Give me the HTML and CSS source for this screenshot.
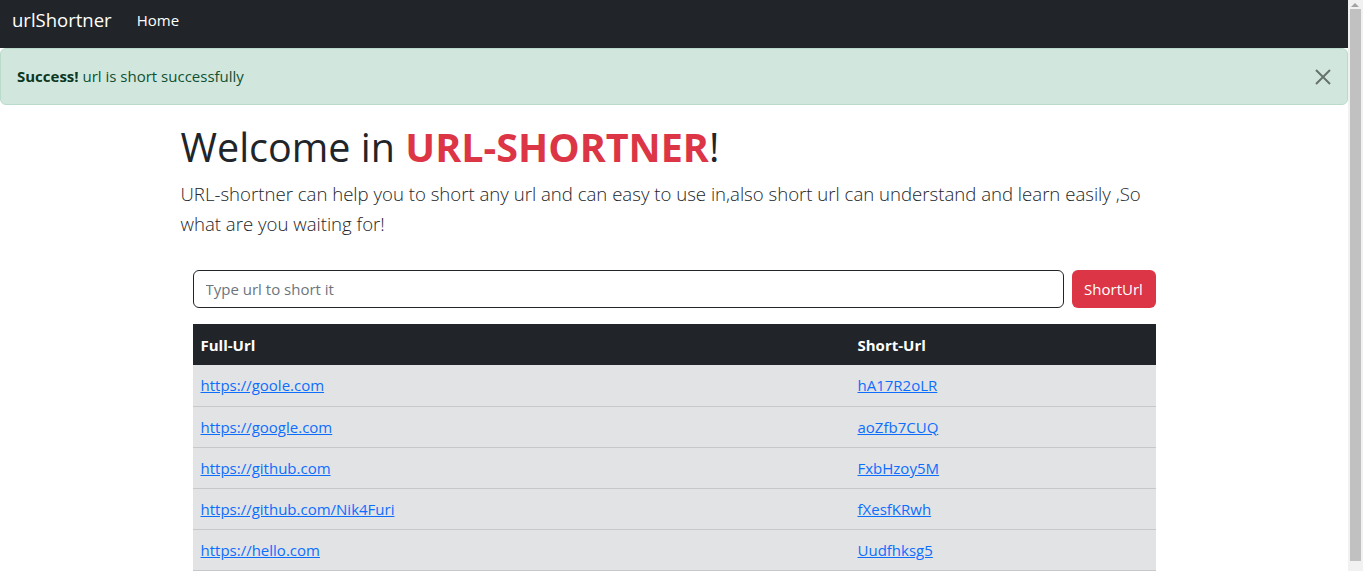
FILE: index.html
```html
<!DOCTYPE html>
<html lang="en">
<head>
<meta charset="utf-8">
<title>urlShortner</title>
<link rel="stylesheet" href="styles.css">
</head>
<body>
<div class="page">
  <nav class="navbar">
    <a class="brand" href="#">urlShortner</a>
    <a class="nav-link" href="#">Home</a>
  </nav>
  <div class="alert">
    <span><strong>Success!</strong> url is short successfully</span>
    <button class="btn-close" aria-label="Close">
      <svg viewBox="0 0 16 16" width="16" height="16"><path d="M1 1 L15 15 M15 1 L1 15" stroke="#000" stroke-width="2" fill="none"/></svg>
    </button>
  </div>
  <main class="container">
    <h1 class="title">Welcome in <b class="red">URL-SHORTNER</b>!</h1>
    <p class="lead">URL-shortner can help you to short any url and can easy to use in,also short url can understand and learn easily ,So what are you waiting for!</p>
    <div class="inner">
      <form class="url-form">
        <input class="url-input" type="text" placeholder="Type url to short it">
        <button class="btn-red" type="button">ShortUrl</button>
      </form>
      <table class="url-table">
        <thead>
          <tr><th class="col-full">Full-Url</th><th>Short-Url</th></tr>
        </thead>
        <tbody>
          <tr><td><a href="#">https://goole.com</a></td><td><a href="#">hA17R2oLR</a></td></tr>
          <tr><td><a href="#">https://google.com</a></td><td><a href="#">aoZfb7CUQ</a></td></tr>
          <tr><td><a href="#">https://github.com</a></td><td><a href="#">FxbHzoy5M</a></td></tr>
          <tr><td><a href="#">https://github.com/Nik4Furi</a></td><td><a href="#">fXesfKRwh</a></td></tr>
          <tr><td><a href="#">https://hello.com</a></td><td><a href="#">Uudfhksg5</a></td></tr>
        </tbody>
      </table>
    </div>
  </main>
</div>
<div class="scrollbar" aria-hidden="true">
  <div class="scroll-arrow"></div>
  <div class="scroll-thumb"></div>
</div>
</body>
</html>
```
FILE: styles.css
```css
* { box-sizing: border-box; }
html, body { margin: 0; }
body {
  font-family: "Open Sans", "Noto Sans", "Liberation Sans", sans-serif;
  font-size: 16px;
  line-height: 1.5;
  color: #212529;
  background: #fff;
}
.page {
  margin-right: 15px;
}
.navbar {
  display: flex;
  align-items: flex-start;
  height: 48px;
  background: #212529;
  padding: 5px 12px 0;
}
.brand {
  color: #fff;
  text-decoration: none;
  font-size: 18.5px;
  line-height: 30px;
  margin-right: 25px;
}
.nav-link {
  color: #fff;
  text-decoration: none;
  font-size: 15px;
  line-height: 30px;
}
.alert {
  display: flex;
  align-items: center;
  justify-content: space-between;
  height: 57px;
  padding: 0 16px;
  background: #d1e7dd;
  border: 1px solid #badbcc;
  border-radius: 6px;
  color: #0f5132;
  font-size: 15px;
  margin-bottom: 16px;
}
.alert strong { font-weight: 700; color: #0a3622; }
.btn-close {
  background: none;
  border: 0;
  padding: 0;
  width: 16px;
  height: 16px;
  opacity: .5;
  display: flex;
}
.container {
  width: 987px;
  margin: 0 auto;
}
.title {
  font-size: 39.5px;
  font-weight: 500;
  line-height: 1.2;
  margin: 0 0 8px;
  padding-top: 3px;
}
.red { color: #dc3545; font-weight: 700; }
.lead {
  font-size: 18.6px;
  font-weight: 300;
  line-height: 30px;
  margin: 0 0 31px;
}
.inner { margin: 0 12px; }
.url-form {
  display: flex;
  gap: 8px;
  margin: 0 0 16px;
}
.url-input {
  flex: 1;
  height: 38px;
  border: 1px solid #212529;
  border-radius: 6px;
  padding: 0 12px;
  font: inherit;
  font-size: 15px;
  color: #212529;
}
.url-input::placeholder { color: #6c757d; }
.btn-red {
  width: 84px;
  height: 38px;
  background: #dc3545;
  color: #fff;
  border: 0;
  border-radius: 6px;
  font: inherit;
  font-size: 15px;
}
.url-table {
  width: 100%;
  border-collapse: collapse;
  font-size: 15px;
  margin-bottom: 16px;
}
.url-table th {
  background: #212529;
  color: #fff;
  text-align: left;
  font-weight: 700;
  height: 41px;
  padding: 0 8px;
  border-bottom: 0;
}
.url-table .col-full { width: 657px; }
.url-table td {
  background: #e2e3e5;
  height: 41px;
  padding: 0 8px;
  border-bottom: 1px solid #c7c8ca;
}
.url-table a { color: #0d6efd; text-decoration: underline; }
.scrollbar {
  position: fixed;
  top: 0;
  right: 0;
  width: 15px;
  height: 100%;
  background: #f1f1f1;
}
.scroll-arrow {
  position: absolute;
  top: 3px;
  left: 3px;
  width: 0;
  height: 0;
  border-left: 4.5px solid transparent;
  border-right: 4.5px solid transparent;
  border-bottom: 4.5px solid #a3a3a3;
}
.scroll-thumb {
  position: absolute;
  top: 9px;
  bottom: 10px;
  left: 2px;
  right: 2px;
  background: #c1c1c1;
}
```
